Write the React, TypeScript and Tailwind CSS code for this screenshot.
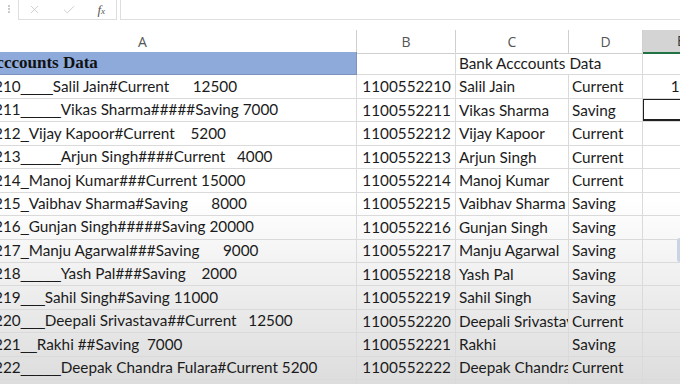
import React from "react";
import { X, Check } from "lucide-react";

const rowsA: [string, string, string][] = [
  ["1100552210", "____", "Salil Jain#Current      12500"],
  ["1100552211", "_____", "Vikas Sharma#####Saving 7000"],
  ["1100552212", "_", "Vijay Kapoor#Current    5200"],
  ["1100552213", "_____", "Arjun Singh####Current   4000"],
  ["1100552214", "_", "Manoj Kumar###Current 15000"],
  ["1100552215", "_", "Vaibhav Sharma#Saving      8000"],
  ["1100552216", "_", "Gunjan Singh#####Saving 20000"],
  ["1100552217", "_", "Manju Agarwal###Saving      9000"],
  ["1100552218", "_____", "Yash Pal###Saving    2000"],
  ["1100552219", "___", "Sahil Singh#Saving 11000"],
  ["1100552220", "___", "Deepali Srivastava##Current   12500"],
  ["1100552221", "__", "Rakhi ##Saving  7000"],
  ["1100552222", "_____", "Deepak Chandra Fulara#Current 5200"],
  ["", "", ""],
];

const rows: [string, string, string][] = [
  ["1100552210", "Salil Jain", "Current"],
  ["1100552211", "Vikas Sharma", "Saving"],
  ["1100552212", "Vijay Kapoor", "Current"],
  ["1100552213", "Arjun Singh", "Current"],
  ["1100552214", "Manoj Kumar", "Current"],
  ["1100552215", "Vaibhav Sharma", "Saving"],
  ["1100552216", "Gunjan Singh", "Saving"],
  ["1100552217", "Manju Agarwal", "Saving"],
  ["1100552218", "Yash Pal", "Saving"],
  ["1100552219", "Sahil Singh", "Saving"],
  ["1100552220", "Deepali Srivastava", "Current"],
  ["1100552221", "Rakhi", "Saving"],
  ["1100552222", "Deepak Chandra Fulara", "Current"],
  ["", "", ""],
];

const cell =
  "h-[23.45px] border-r border-b border-[#dadada] flex items-center overflow-hidden whitespace-pre px-[4px] text-[15.3px] text-[#1b1b1b] font-['Lato',sans-serif]";

export default function App() {
  return (
    <div className="w-[680px] h-[384px] overflow-hidden bg-white relative">
      {/* formula bar */}
      <div className="h-[20px] flex items-stretch">
        <div className="w-[18px] flex flex-col items-center justify-center gap-[1px] pb-[2px]">
          <span className="w-[2px] h-[2px] bg-[#b8b8b8] rounded-full" />
          <span className="w-[2px] h-[2px] bg-[#b8b8b8] rounded-full" />
          <span className="w-[2px] h-[2px] bg-[#b8b8b8] rounded-full" />
        </div>
        <div className="w-[99px] border-l border-r border-b border-[#dedede] flex items-center justify-between pl-[9px] pr-[11px]">
          <X size={13} strokeWidth={1.4} color="#c4c4c4" />
          <Check size={14} strokeWidth={1.4} color="#c4c4c4" />
          <span className="font-['Liberation_Serif',serif] italic text-[13px] text-[#555] leading-none">
            f<span className="text-[9px]">x</span>
          </span>
        </div>
        <div className="w-[3px]" />
        <div className="flex-1 border-l border-b border-[#dedede]" />
      </div>
      <div className="h-[10px]" />

      {/* sheet */}
      <div className="ml-[-71px] w-[790px]">
        {/* column headers */}
        <div className="grid grid-cols-[428px_99px_113px_74px_76px] h-[22px] font-['Open_Sans',sans-serif] text-[14px] text-[#555]">
          <div className="border-r border-b border-[#cfcfcf] flex items-center justify-center pb-[1px]">A</div>
          <div className="border-r border-b border-[#cfcfcf] flex items-center justify-center pb-[1px]">B</div>
          <div className="border-r border-b border-[#cfcfcf] flex items-center justify-center pb-[1px]">C</div>
          <div className="border-r border-b border-[#cfcfcf] flex items-center justify-center pb-[1px]">D</div>
          <div className="bg-[#d4d4d4] border-b-2 border-[#217346] flex items-center justify-center pb-[1px] text-[#333]">E</div>
        </div>

        {/* body */}
        <div className="grid grid-cols-[428px_99px_113px_74px_76px] bg-[linear-gradient(to_bottom,#ffffff_0%,#ffffff_42%,#ececec_70%,#d9d9d9_100%)]">
          {/* row 1 */}
          <div className="h-[23.45px] bg-[#8eaadb] border-r border-b border-[#7d93bd] flex items-center overflow-hidden whitespace-pre pl-[13px] font-['Liberation_Serif',serif] font-bold text-[17px] text-[#111]">
            Bank Acccounts Data
          </div>
          <div className={cell}></div>
          <div className={cell + " col-span-2 pl-[3px]"}>Bank Acccounts Data</div>
          <div className={cell + " border-r-0"}></div>

          {rows.map((r, i) => (
            <React.Fragment key={i}>
              <div className={cell + " pl-[3px]"}>
                <span>
                  {rowsA[i][0]}
                  <span className="font-['Liberation_Sans',sans-serif] text-[14.4px]">{rowsA[i][1]}</span>
                  {rowsA[i][2]}
                </span>
              </div>
              <div className={cell + " justify-end"}>{r[0]}</div>
              <div className={cell + " pl-[3px]"}>{r[1]}</div>
              <div className={cell + " pl-[3px]"}>{r[2]}</div>
              <div className={cell + " border-r-0 relative justify-end"}>
                {i === 0 ? "12500" : ""}
                {i === 1 ? (
                  <div className="absolute left-[-1px] top-[-1px] right-[-4px] bottom-[0px] border-2 border-[#1f1f1f]" />
                ) : null}
              </div>
            </React.Fragment>
          ))}
        </div>
      </div>

      <div className="absolute right-0 top-[238px] w-[3px] h-[24px] rounded-l-full bg-[#c9d3e6]" />
    </div>
  );
}
